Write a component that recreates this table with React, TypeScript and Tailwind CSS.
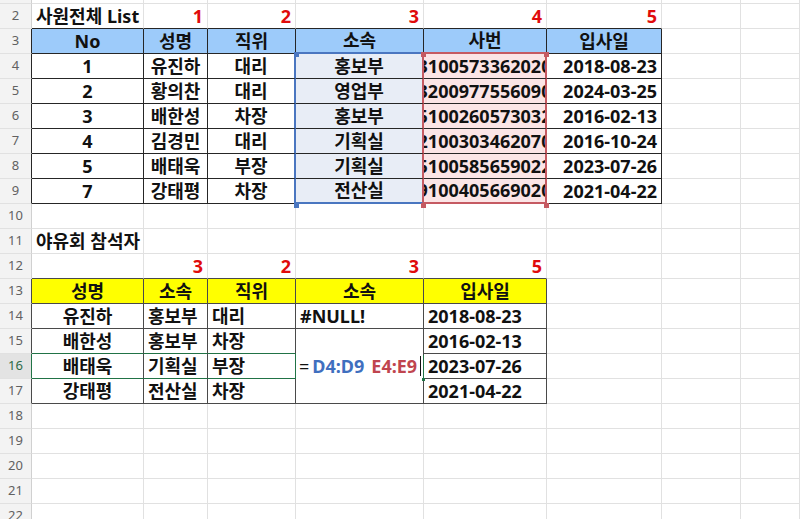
import React from "react";

type CellCfg = {
  content?: React.ReactNode;
  rw: string;
  rc: string;
  bw: string;
  bc: string;
  cls: string;
  span?: boolean;
  skip?: boolean;
};

const G_R = "border-r-[#e1e1e1]";
const G_B = "border-b-[#e1e1e1]";
const D1_R = "border-r-[#262626]";
const D1_B = "border-b-[#262626]";
const D2_R = "border-r-[#4a4a4a]";
const D2_B = "border-b-[#4a4a4a]";
const BL_R = "border-r-[#4a76c0]";
const BL_B = "border-b-[#4a76c0]";
const RD_R = "border-r-[#c55a62]";
const RD_B = "border-b-[#c55a62]";
const GR_R = "border-r-[#217346]";
const GR_B = "border-b-[#217346]";

const T1: string[][] = [
  ["No", "성명", "직위", "소속", "사번", "입사일"],
  ["1", "유진하", "대리", "홍보부", "831005733620201", "2018-08-23"],
  ["2", "황의찬", "대리", "영업부", "932009775560901", "2024-03-25"],
  ["3", "배한성", "차장", "홍보부", "751002605730321", "2016-02-13"],
  ["4", "김경민", "대리", "기획실", "821003034620701", "2016-10-24"],
  ["5", "배태욱", "부장", "기획실", "651005856590221", "2023-07-26"],
  ["7", "강태평", "차장", "전산실", "891004056690201", "2021-04-22"],
];

const T2: string[][] = [
  ["성명", "소속", "직위", "소속", "입사일"],
  ["유진하", "홍보부", "대리", "#NULL!", "2018-08-23"],
  ["배한성", "홍보부", "차장", "", "2016-02-13"],
  ["배태욱", "기획실", "부장", "", "2023-07-26"],
  ["강태평", "전산실", "차장", "", "2021-04-22"],
];

const RED = "text-[#e00b0b]";

function getCell(r: number, c: number): CellCfg {
  const cfg: CellCfg = {
    rw: "border-r",
    rc: G_R,
    bw: "border-b",
    bc: G_B,
    cls: "",
  };

  if (c === 0) {
    cfg.rc = "border-r-[#d0d0d0]";
    cfg.cls =
      "justify-center bg-[#f3f3f3] text-[#616161] font-['Noto_Sans',sans-serif] text-[13px] font-normal";
    if (r >= 2) cfg.content = String(r);
    if (r >= 3 && r <= 9) cfg.rc = D1_R;
    if (r >= 13 && r <= 17) cfg.rc = D2_R;
    if (r === 16) {
      cfg.rc = GR_R;
      cfg.cls =
        "justify-center bg-[#e3e3e3] text-[#2e6b47] font-['Noto_Sans',sans-serif] text-[13px] font-normal";
    }
    return cfg;
  }

  if (r === 2) {
    if (c >= 1 && c <= 6) cfg.bc = D1_B;
    if (c === 1) {
      cfg.content = "사원전체 List";
      cfg.cls = "justify-start pl-[4px] overflow-visible";
    } else if (c >= 2 && c <= 6) {
      cfg.content = String(c - 1);
      cfg.cls = `justify-end pr-[4px] ${RED}`;
    }
  }

  if (r >= 3 && r <= 9 && c >= 1 && c <= 6) {
    cfg.rc = D1_R;
    cfg.bc = D1_B;
    cfg.content = T1[r - 3][c - 1];
    if (r === 3) {
      cfg.cls = "justify-center bg-[#9dcbfa]";
    } else if (c === 4) {
      cfg.cls = "justify-center bg-[#e8edf6]";
    } else if (c === 5) {
      cfg.cls = "justify-center bg-[#fbe5e6]";
    } else if (c === 6) {
      cfg.cls = "justify-end pr-[4px]";
    } else {
      cfg.cls = "justify-center";
    }
    if (c === 3 && r >= 4) {
      cfg.rw = "border-r-2";
      cfg.rc = BL_R;
    }
    if (c === 4) {
      if (r === 3 || r === 9) {
        cfg.bw = "border-b-2";
        cfg.bc = BL_B;
      }
      if (r >= 4) {
        cfg.rw = "border-r-2";
        cfg.rc = RD_R;
      }
    }
    if (c === 5) {
      if (r === 3 || r === 9) {
        cfg.bw = "border-b-2";
        cfg.bc = RD_B;
      }
      if (r >= 4) {
        cfg.rw = "border-r-2";
        cfg.rc = RD_R;
      }
    }
  }

  if (r === 11 && c === 1) {
    cfg.content = "야유회 참석자";
    cfg.cls = "justify-start pl-[4px] overflow-visible";
  }

  if (r === 12) {
    if (c >= 1 && c <= 5) cfg.bc = D2_B;
    const m: Record<number, string> = { 2: "3", 3: "2", 4: "3", 5: "5" };
    if (m[c]) {
      cfg.content = m[c];
      cfg.cls = `justify-end pr-[4px] ${RED}`;
    }
  }

  if (r >= 13 && r <= 17 && c >= 1 && c <= 5) {
    cfg.rc = D2_R;
    cfg.bc = D2_B;
    if (c === 4 && (r === 16 || r === 17)) {
      cfg.skip = true;
      return cfg;
    }
    cfg.content = T2[r - 13][c - 1];
    if (r === 13) {
      cfg.cls = "justify-center bg-[#ffff00]";
    } else if (c === 1) {
      cfg.cls = "justify-center";
    } else {
      cfg.cls = "justify-start pl-[4px]";
    }
    if (c === 4 && r === 15) {
      cfg.span = true;
      cfg.content = (
        <span className="flex items-center">
          <span className="font-normal mr-[3px]">=</span>
          <span className="text-[#3f6fbf]">D4:D9</span>
          <span className="ml-[7px] text-[#c0454f]">E4:E9</span>
          <span className="ml-[3px] inline-block w-px h-[20px] bg-[#111]" />
        </span>
      );
      cfg.cls = "justify-start pl-[3px]";
    }
    if (c >= 1 && c <= 3 && (r === 15 || r === 16)) {
      cfg.bc = GR_B;
    }
    if (c === 3 && r === 16) {
      cfg.rc = GR_R;
    }
  }

  return cfg;
}

export default function App() {
  const cells: React.ReactNode[] = [];
  for (let r = 1; r <= 22; r++) {
    for (let c = 0; c <= 8; c++) {
      const cfg = getCell(r, c);
      if (cfg.skip) continue;
      cells.push(
        <div
          key={`${r}-${c}`}
          className={[
            "flex items-center whitespace-nowrap min-w-0",
            cfg.cls.includes("overflow-visible") ? "" : "overflow-hidden",
            cfg.rw,
            cfg.rc,
            cfg.bw,
            cfg.bc,
            cfg.span ? "row-span-3" : "",
            cfg.cls,
          ].join(" ")}
        >
          {r === 1 ? null : cfg.content}
        </div>
      );
    }
  }

  return (
    <div className="relative w-[800px] h-[519px] overflow-hidden bg-white font-['Noto_Sans','Noto_Sans_CJK_KR',sans-serif] text-[18px] font-bold text-[#111]">
      <div className="grid grid-cols-[32px_112px_64px_88px_128px_123px_115px_79px_1fr] grid-rows-[4px_repeat(21,25px)]">
        {cells}
      </div>
      {/* range handles */}
      <div className="absolute left-[294px] top-[52px] w-[5px] h-[5px] bg-[#4a76c0]" />
      <div className="absolute left-[294px] top-[203px] w-[5px] h-[5px] bg-[#4a76c0]" />
      <div className="absolute left-[421px] top-[52px] w-[5px] h-[5px] bg-[#c55a62]" />
      <div className="absolute left-[421px] top-[203px] w-[5px] h-[5px] bg-[#c55a62]" />
      <div className="absolute left-[544px] top-[52px] w-[5px] h-[5px] bg-[#c55a62]" />
      <div className="absolute left-[544px] top-[203px] w-[5px] h-[5px] bg-[#c55a62]" />
      {/* selection mark at E16 */}
      <div className="absolute left-[423px] top-[355px] w-px h-[25px] bg-[#217346]" />
      <div className="absolute left-[422px] top-[378px] w-[3px] h-[3px] bg-[#217346]" />
    </div>
  );
}
